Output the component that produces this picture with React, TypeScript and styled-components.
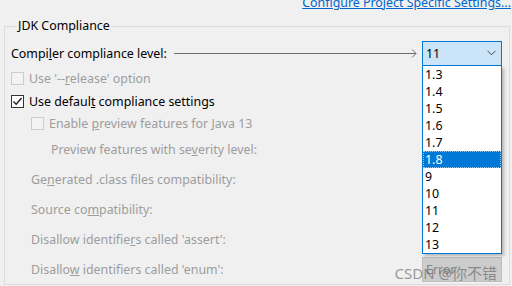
import React from 'react'
import styled, { createGlobalStyle } from 'styled-components'

const GlobalStyle = createGlobalStyle`
  html, body {
    margin: 0;
    padding: 0;
    background: #f0f0f0;
    overflow: hidden;
  }
  body {
    font-family: "Noto Sans", "Noto Sans CJK SC", sans-serif;
    font-size: 12.4px;
    color: #000;
  }
`

// --- Styled Components ---
const Page = styled.div`
  position: relative;
  width: 512px;
  height: 286px;
  overflow: hidden;
  background: #f0f0f0;
`

const TopBar = styled.div`
  height: 20px;
  display: flex;
  justify-content: flex-end;
  align-items: flex-start;
  padding-right: 1px;
`

const Link = styled.a`
  color: #0066cc;
  text-decoration: underline;
  line-height: 14px;
  margin-top: -4px;
  cursor: pointer;
`

const Group = styled.fieldset`
  margin: 0 0 0 4px;
  width: 506px;
  box-sizing: border-box;
  border: 1px solid #dcdcdc;
  padding: 8px 7px 0 6px;
  min-width: 0;
`

const Legend = styled.legend`
  padding: 0 1px;
  margin-left: 6px;
  line-height: 12px;
  height: 12px;
`

const Row = styled.div<{ $h: number; $indent?: number }>`
  height: ${(p) => p.$h}px;
  display: flex;
  align-items: center;
  padding-left: ${(p) => p.$indent || 0}px;
`

const Label = styled.span<{ $disabled?: boolean }>`
  color: ${(p) => (p.$disabled ? '#9d9d9d' : '#000')};
  white-space: nowrap;
`

const U = styled.span`
  text-decoration: underline;
`

const Leader = styled.div`
  flex: 1;
  display: flex;
  align-items: center;
  margin: 0 5px 0 7px;
  height: 9px;
`

const LeaderLine = styled.div`
  flex: 1;
  height: 1px;
  background: #6d6d6d;
`

const Spacer = styled.div`
  flex: 1;
`

const Box = styled.span<{ $disabled?: boolean }>`
  width: 13px;
  height: 13px;
  box-sizing: border-box;
  border: 1px solid ${(p) => (p.$disabled ? '#cccccc' : '#333333')};
  background: ${(p) => (p.$disabled ? '#f3f3f3' : '#ffffff')};
  margin-right: 5px;
  display: inline-flex;
  align-items: center;
  justify-content: center;
  flex: none;
`

const ComboWrap = styled.div`
  position: relative;
  width: 80px;
  flex: none;
`

const Combo = styled.div<{ $variant: 'open' | 'disabled' }>`
  height: 25px;
  box-sizing: border-box;
  display: flex;
  align-items: center;
  justify-content: space-between;
  padding: 0 5px 0 3px;
  border: 1px solid ${(p) => (p.$variant === 'open' ? '#0078d7' : '#bfbfbf')};
  background: ${(p) => (p.$variant === 'open' ? '#cce4f7' : '#cccccc')};
  color: ${(p) => (p.$variant === 'open' ? '#000' : '#838383')};
`

const DropList = styled.ul`
  position: absolute;
  top: 100%;
  left: 0;
  width: 80px;
  margin: 0;
  padding: 0;
  list-style: none;
  box-sizing: border-box;
  border: 1px solid #0078d7;
  border-top: none;
  background: #ffffff;
  box-shadow: 2px 2px 3px rgba(0, 0, 0, 0.25);
  z-index: 5;
`

const Item = styled.li<{ $selected?: boolean }>`
  height: 17px;
  line-height: 17px;
  padding-left: 2px;
  box-sizing: border-box;
  background: ${(p) => (p.$selected ? '#0078d7' : 'transparent')};
  color: ${(p) => (p.$selected ? '#ffffff' : '#000')};
  outline: ${(p) => (p.$selected ? '1px dotted #9ccbf2' : 'none')};
  outline-offset: -1px;
`

const Watermark = styled.div`
  position: absolute;
  right: 15px;
  bottom: 4px;
  font-size: 15px;
  line-height: 18px;
  color: rgba(90, 90, 90, 0.6);
  pointer-events: none;
  z-index: 10;
`

const versions = ['1.3', '1.4', '1.5', '1.6', '1.7', '1.8', '9', '10', '11', '12', '13']

function Check() {
  return (
    <svg width="11" height="11" viewBox="0 0 11 11">
      <path d="M1.5 5.5 L4.2 8.3 L9.5 2" fill="none" stroke="#222" strokeWidth="1.4" />
    </svg>
  )
}

function Chevron() {
  return (
    <svg width="9" height="6" viewBox="0 0 9 6">
      <path d="M0.5 0.8 L4.5 4.8 L8.5 0.8" fill="none" stroke="#444" strokeWidth="1" />
    </svg>
  )
}

function ArrowHead() {
  return (
    <svg width="6" height="9" viewBox="0 0 6 9" style={{ marginLeft: -5 }}>
      <path d="M1 0.5 L5 4.5 L1 8.5" fill="none" stroke="#6d6d6d" strokeWidth="1" />
    </svg>
  )
}

export default function App() {
  return (
    <Page>
      <GlobalStyle />
      <TopBar>
        <Link>Configure Project Specific Settings...</Link>
      </TopBar>
      <Group>
        <Legend>JDK Compliance</Legend>
        <Row $h={26}>
          <Label>
            Compi<U>l</U>er compliance level:
          </Label>
          <Leader>
            <LeaderLine />
            <ArrowHead />
          </Leader>
          <ComboWrap>
            <Combo $variant="open">
              <span>11</span>
              <Chevron />
            </Combo>
            <DropList>
              {versions.map((v) => (
                <Item key={v} $selected={v === '1.8'}>
                  {v}
                </Item>
              ))}
            </DropList>
          </ComboWrap>
        </Row>
        <Row $h={24}>
          <Box $disabled />
          <Label $disabled>
            Use '--<U>r</U>elease' option
          </Label>
        </Row>
        <Row $h={22}>
          <Box>
            <Check />
          </Box>
          <Label>
            Use defaul<U>t</U> compliance settings
          </Label>
        </Row>
        <Row $h={22} $indent={20}>
          <Box $disabled />
          <Label $disabled>
            Enable <U>p</U>review features for Java 13
          </Label>
        </Row>
        <Row $h={30} $indent={40}>
          <Label $disabled>
            Preview features with se<U>v</U>erity level:
          </Label>
        </Row>
        <Row $h={30} $indent={20}>
          <Label $disabled>
            Ge<U>n</U>erated .class files compatibility:
          </Label>
        </Row>
        <Row $h={30} $indent={20}>
          <Label $disabled>
            Source co<U>m</U>patibility:
          </Label>
        </Row>
        <Row $h={30} $indent={20}>
          <Label $disabled>
            Disallow identifie<U>r</U>s called 'assert':
          </Label>
        </Row>
        <Row $h={30} $indent={20}>
          <Label $disabled>
            Disallo<U>w</U> identifiers called 'enum':
          </Label>
          <Spacer />
          <ComboWrap>
            <Combo $variant="disabled">
              <span>Error</span>
            </Combo>
          </ComboWrap>
        </Row>
      </Group>
      <Watermark>CSDN @你不错</Watermark>
    </Page>
  )
}
